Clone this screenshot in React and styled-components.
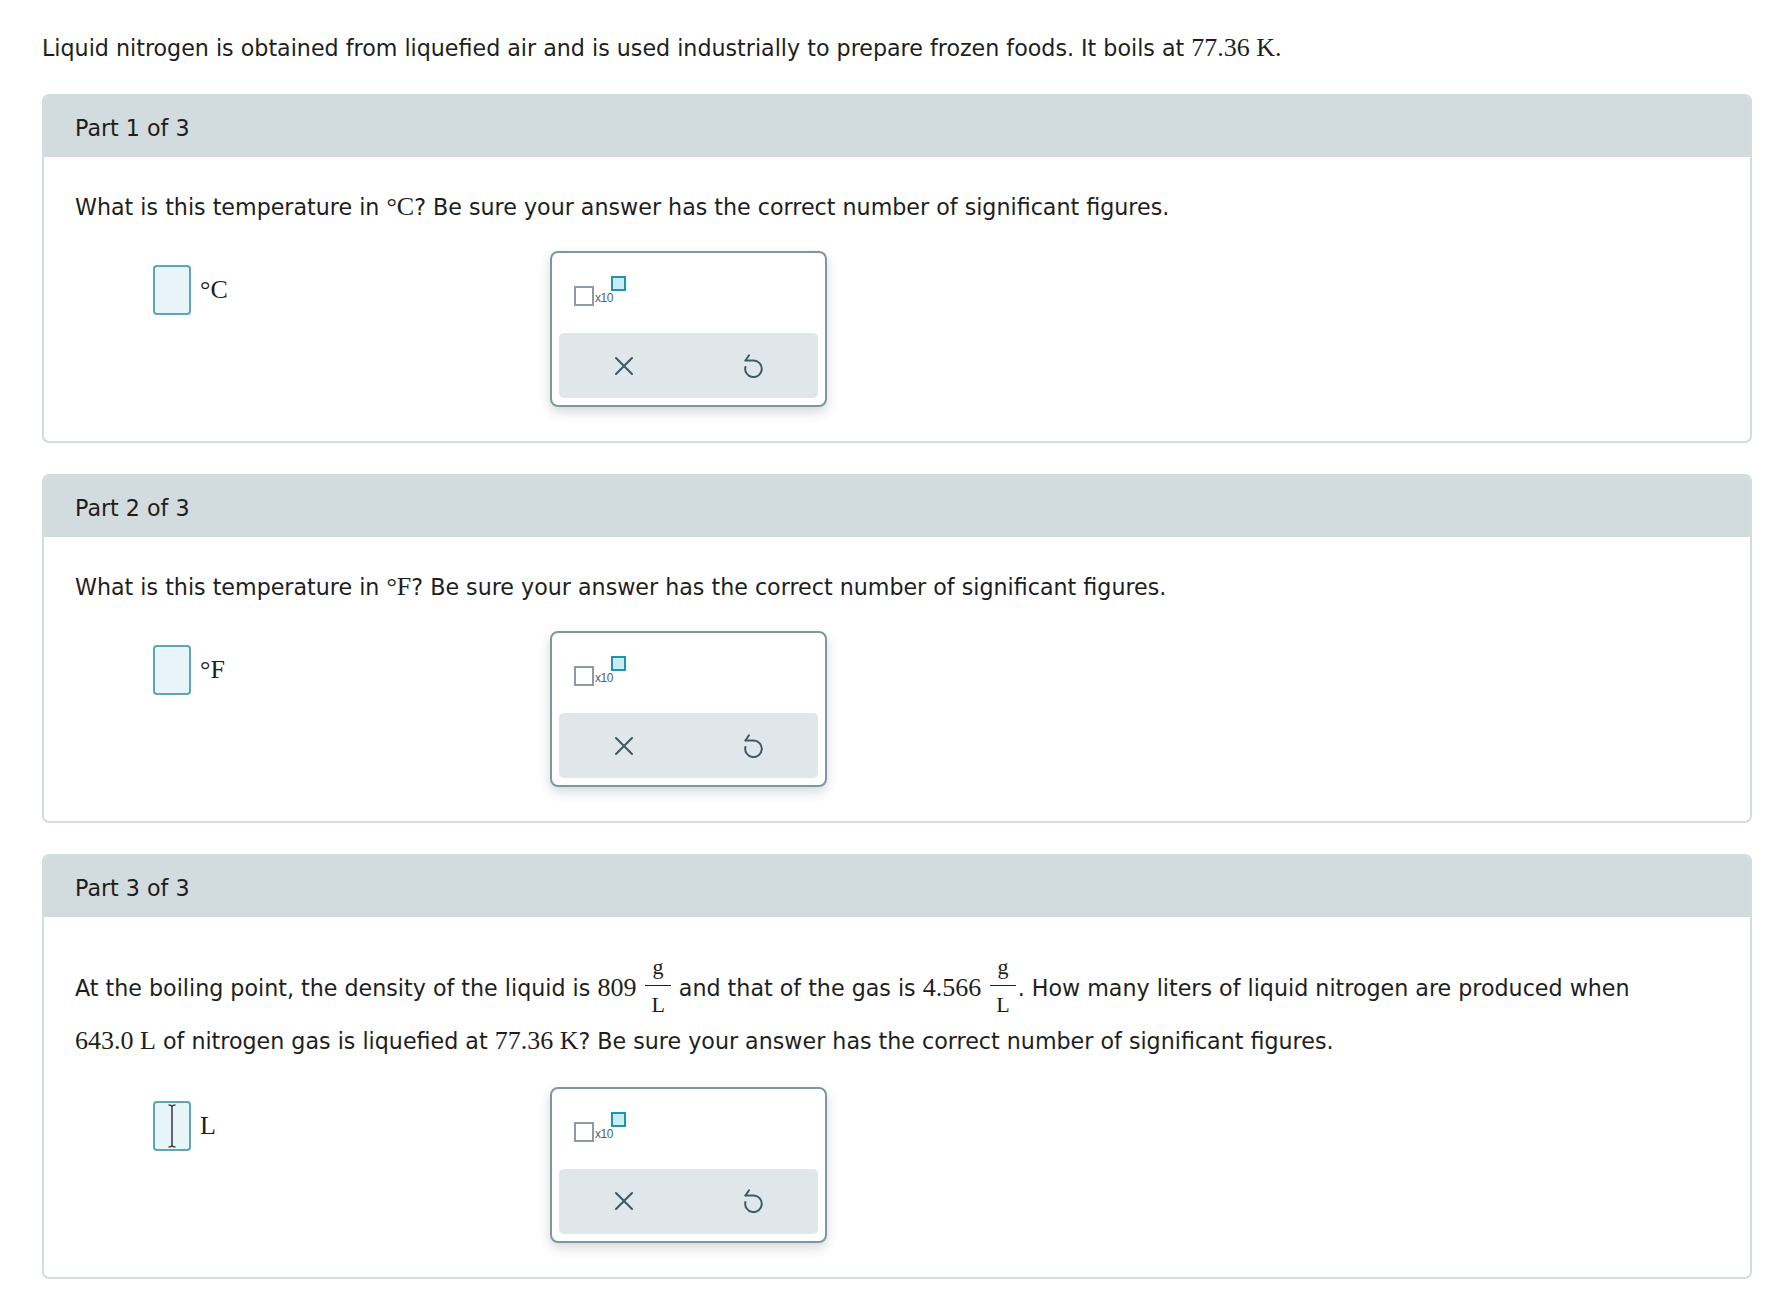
import React from "react";
import styled, { createGlobalStyle } from "styled-components";

const Global = createGlobalStyle`
  html, body { margin: 0; padding: 0; background: #ffffff; }
  body { font-family: "DejaVu Sans", Verdana, sans-serif; color: #1e1e1e; }
`;

const Page = styled.div`
  padding: 32px 38px 40px 42px;
  font-size: 22.2px;
  line-height: 32px;
`;

const Intro = styled.p`
  margin: 0 0 30px 0;
`;

const M = styled.span`
  font-family: "Liberation Serif", "Times New Roman", serif;
  font-size: 26px;
`;

const Part = styled.section`
  border: 2px solid #d3dcdf;
  border-radius: 7px;
  overflow: hidden;
  margin-bottom: 31px;
`;

const PartHeader = styled.div`
  background: #d2dbde;
  height: 61px;
  box-sizing: border-box;
  padding: 16px 31px 0;
`;

const PartBody = styled.div`
  padding: 34px 31px 34px;
`;

const Question = styled.p`
  margin: 0;
`;

const AnswerRow = styled.div`
  display: grid;
  grid-template-columns: 475px 277px;
  margin-top: ${(p) => p.$gap || 28}px;
`;

const AnswerField = styled.div`
  display: flex;
  align-items: center;
  gap: 9px;
  padding: 14px 0 0 78px;
  align-self: start;
`;

const InputBox = styled.div`
  width: 38px;
  height: 50px;
  box-sizing: border-box;
  border: 2px solid #5ea5b6;
  border-radius: 4px;
  background: #e7f5f8;
  display: flex;
  align-items: center;
  justify-content: center;
`;

const Unit = styled.span`
  font-family: "Liberation Serif", "Times New Roman", serif;
  font-size: 26px;
  line-height: 32px;
  color: #1e1e1e;
`;

const Palette = styled.div`
  width: 277px;
  height: 156px;
  box-sizing: border-box;
  border: 2px solid #7e979f;
  border-radius: 8px;
  background: #ffffff;
  box-shadow: 0 5px 12px rgba(40, 60, 70, 0.2);
  padding: 0 7px 7px;
  display: flex;
  flex-direction: column;
`;

const PaletteTop = styled.div`
  height: 80px;
  padding: 23px 0 0 15px;
  box-sizing: border-box;
`;

const ExpButton = styled.div`
  display: inline-flex;
  align-items: flex-end;
  height: 30px;
`;

const BaseSquare = styled.span`
  width: 20px;
  height: 20px;
  box-sizing: border-box;
  border: 2px solid #8a9ba2;
  background: #fff;
`;

const ExpText = styled.span`
  font-family: "Liberation Sans", Arial, sans-serif;
  font-size: 12px;
  line-height: 12px;
  color: #4d6169;
  margin: 0 0 2px 1px;
  letter-spacing: -0.4px;
`;

const SupSquare = styled.span`
  width: 15px;
  height: 15px;
  box-sizing: border-box;
  border: 2px solid #1e95af;
  background: #c8edf4;
  margin: 0 0 15px -2px;
`;

const ActionBar = styled.div`
  flex: 1;
  background: #e0e7ea;
  border-radius: 5px;
  display: grid;
  grid-template-columns: 1fr 1fr;
  place-items: center;
`;

const IconButton = styled.div`
  display: flex;
  align-items: center;
  justify-content: center;
  color: #3e5a66;
`;

const Frac = styled.span`
  display: inline-flex;
  flex-direction: column;
  align-items: stretch;
  vertical-align: 22px;
  margin: 5px ${(p) => (p.$tight ? 2 : 8)}px 9.4px 9px;
  font-family: "Liberation Serif", "Times New Roman", serif;
  font-size: 22px;
  line-height: 22px;
  text-align: center;
`;

const Num = styled.span`
  display: block;
  padding: 0 6px 7px;
`;

const Den = styled.span`
  display: block;
  border-top: 1px solid #1e1e1e;
  padding: 7.6px 6px 0;
`;

const Fraction = ({ n, d, tight }) => (
  <Frac $tight={tight}>
    <Num>{n}</Num>
    <Den>{d}</Den>
  </Frac>
);

const XIcon = () => (
  <svg width="20" height="20" viewBox="0 0 20 20" fill="none">
    <path d="M2 2 L18 18 M18 2 L2 18" stroke="currentColor" strokeWidth="2.1" strokeLinecap="round" />
  </svg>
);

const UndoIcon = () => (
  <svg width="20" height="24" viewBox="0 0 20 24" fill="none">
    <path
      d="M2.5 6.5 H10.5 A8.3 8.3 0 1 1 2.4 13"
      stroke="currentColor"
      strokeWidth="2"
      strokeLinecap="round"
      strokeLinejoin="round"
    />
    <path d="M6 1.3 L2.5 6.5" stroke="currentColor" strokeWidth="2" strokeLinecap="round" />
  </svg>
);

const IBeam = () => (
  <svg width="12" height="46" viewBox="0 0 12 46" fill="none">
    <path d="M6 3 V43" stroke="#444" strokeWidth="1.6" />
    <path d="M2.5 2 Q6 2 6 4 Q6 2 9.5 2" stroke="#444" strokeWidth="1.4" fill="none" />
    <path d="M2.5 44 Q6 44 6 42 Q6 44 9.5 44" stroke="#444" strokeWidth="1.4" fill="none" />
  </svg>
);

const Keypad = () => (
  <Palette>
    <PaletteTop>
      <ExpButton>
        <BaseSquare />
        <ExpText>x10</ExpText>
        <SupSquare />
      </ExpButton>
    </PaletteTop>
    <ActionBar>
      <IconButton>
        <XIcon />
      </IconButton>
      <IconButton>
        <UndoIcon />
      </IconButton>
    </ActionBar>
  </Palette>
);

const parts = [
  {
    title: "Part 1 of 3",
    question: (
      <>
        What is this temperature in <M>°C</M>? Be sure your answer has the correct number of significant figures.
      </>
    ),
    unit: "°C",
  },
  {
    title: "Part 2 of 3",
    question: (
      <>
        What is this temperature in <M>°F</M>? Be sure your answer has the correct number of significant figures.
      </>
    ),
    unit: "°F",
  },
  {
    title: "Part 3 of 3",
    question: (
      <>
        At the boiling point, the density of the liquid is <M>809</M>
        <Fraction n="g" d="L" />
        and that of the gas is <M>4.566</M>
        <Fraction n="g" d="L" tight />. How many liters of liquid nitrogen are produced when
        <br />
        <M>643.0 L</M> of nitrogen gas is liquefied at <M>77.36 K</M>? Be sure your answer has the correct number of
        significant figures.
      </>
    ),
    unit: "L",
    cursor: true,
    gap: 30,
  },
];

export default function App() {
  return (
    <>
      <Global />
      <Page>
        <Intro>
          Liquid nitrogen is obtained from liquefied air and is used industrially to prepare frozen foods. It boils at{" "}
          <M>77.36 K.</M>
        </Intro>
        {parts.map((p) => (
          <Part key={p.title}>
            <PartHeader>{p.title}</PartHeader>
            <PartBody>
              <Question>{p.question}</Question>
              <AnswerRow $gap={p.gap}>
                <AnswerField>
                  <InputBox>{p.cursor && <IBeam />}</InputBox>
                  <Unit>{p.unit}</Unit>
                </AnswerField>
                <Keypad />
              </AnswerRow>
            </PartBody>
          </Part>
        ))}
      </Page>
    </>
  );
}
